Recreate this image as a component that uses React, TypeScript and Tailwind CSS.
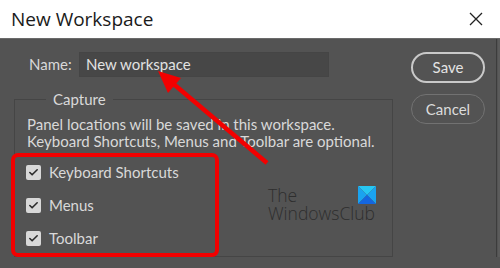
import { Check } from "lucide-react";

const options = ["Keyboard Shortcuts", "Menus", "Toolbar"];

function WindowsClubMark() {
  return (
    <div className="pointer-events-none absolute left-[268px] top-[184px] w-[108px] font-['Open_Sans',sans-serif] text-[17.5px] font-light text-[#2e2e2e]">
      <div className="flex h-[20px] items-start justify-between">
        <span className="mt-[3px] leading-[16px]">The</span>
        <svg width="18" height="18" viewBox="0 0 18 18" className="mt-[2px]">
          <polygon points="0,0 18,0 9,9" fill="#27c7f2" />
          <polygon points="0,0 9,9 0,18" fill="#1aa3ef" />
          <polygon points="18,0 18,18 9,9" fill="#1aa3ef" />
          <polygon points="0,18 9,9 18,18" fill="#1466e0" />
        </svg>
      </div>
      <div className="leading-[18px]">WindowsClub</div>
    </div>
  );
}

function Arrow() {
  return (
    <svg className="pointer-events-none absolute left-0 top-0" width="500" height="268">
      <line x1="267" y1="163" x2="170" y2="81" stroke="#f20000" strokeWidth="4.5" />
      <polygon points="158,71 181,78 168,93" fill="#f20000" />
    </svg>
  );
}

export default function App() {
  return (
    <div className="relative h-[268px] w-[500px] overflow-hidden bg-[#535353] font-['Lato',sans-serif] text-[#d9d9d9]">
      <header className="flex h-[39px] items-center justify-between border-b border-[#6a6a6a] bg-white pl-[11px] pr-[17px]">
        <h1 className="font-['Open_Sans',sans-serif] text-[19px] leading-none text-[#1a1a1a]">New Workspace</h1>
        <svg width="14" height="14" viewBox="0 0 14 14" className="text-[#222]">
          <path d="M1 1L13 13M13 1L1 13" stroke="currentColor" strokeWidth="1.3" />
        </svg>
      </header>

      <div className="flex border-r-2 border-r-[#5b5b5b] pr-[1px]">
        <div className="flex flex-1 border-r border-r-[#3c3c3c]">
          <div className="flex w-[393px] flex-col pl-[14px] pt-[13px]">
            <div className="flex items-center text-[15px]">
              <label className="ml-[15px] w-[50px]">Name:</label>
              <div className="flex h-[25px] w-[250px] items-center border border-[#454545] bg-[#474747] px-[6px] text-[#e2e2e2]">
                New workspace
              </div>
            </div>

            <fieldset className="mt-[15px] h-[165px] w-[379px] border border-[#454545] px-[12px]">
              <legend className="ml-[19px] px-[7px] text-[15px] leading-[15px]">Capture</legend>
              <p className="mt-[9px] text-[15px] leading-[17px]">
                Panel locations will be saved in this workspace.
                <br />
                Keyboard Shortcuts, Menus and Toolbar are optional.
              </p>
              <div className="-ml-[16px] mt-[3px] flex h-[104px] w-[208px] flex-col justify-center gap-[16px] rounded-[7px] border-4 border-[#f20000] pl-[11px]">
                {options.map((label) => (
                  <label key={label} className="flex items-center gap-[8px] text-[15px] leading-[17px]">
                    <span className="flex h-[15px] w-[15px] items-center justify-center rounded-[2px] bg-[#d8d8d8]">
                      <Check size={11} strokeWidth={3.5} className="text-[#2b2b2b]" />
                    </span>
                    {label}
                  </label>
                ))}
              </div>
            </fieldset>
          </div>

          <div className="flex flex-col gap-[11px] pl-[18px] pt-[13px]">
            <button className="h-[31px] w-[74px] rounded-full border-2 border-[#c9c9c9] text-[15px] text-[#e4e4e4]">
              Save
            </button>
            <button className="h-[30px] w-[74px] rounded-full border border-[#727272] text-[15px] text-[#dcdcdc]">
              Cancel
            </button>
          </div>
        </div>
      </div>

      <WindowsClubMark />
      <Arrow />
    </div>
  );
}
